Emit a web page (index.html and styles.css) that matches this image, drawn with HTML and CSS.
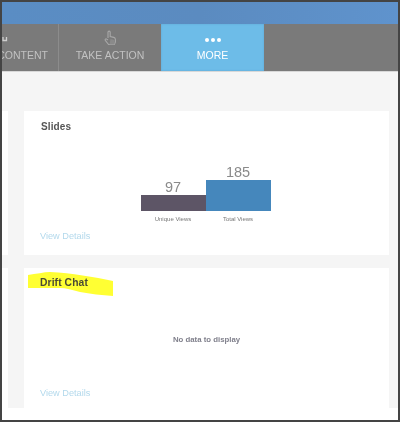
FILE: index.html
```html
<!DOCTYPE html>
<html lang="en">
<head>
<meta charset="utf-8">
<title>Drift Chat</title>
<link rel="stylesheet" href="styles.css">
</head>
<body>
<div class="frame">
  <div class="topbar"></div>
  <nav class="nav">
    <div class="tab tab-clipped">
      <svg class="stub-icon" width="6" height="6" viewBox="0 0 6 6"><path d="M1 0v3.500h3.500V0" fill="none" stroke="#cfcfcf" stroke-width="1.300"/></svg>
      <span class="tab-label">CONTENT</span>
    </div>
    <div class="tab">
      <svg class="tab-icon" width="14" height="16" viewBox="0 0 14 16"><path d="M5 8V2.200a1.100 1.100 0 0 1 2.200 0V6.500l3.600.9c1 .3 1.600.9 1.600 2v2.400l-1 2.700H5.600L2.300 10.400c-.7-1 .5-2 1.400-1.300L5 10" fill="none" stroke="#a8a8a8" stroke-width="1.100"/><path d="M6.500 14.500h5v-4.500l-4-1z" fill="#8a8a8a"/></svg>
      <span class="tab-label">TAKE ACTION</span>
    </div>
    <div class="tab tab-active">
      <div class="dots"><i></i><i></i><i></i></div>
      <span class="tab-label">MORE</span>
    </div>
  </nav>
  <main class="page">
    <div class="row row-first">
      <div class="stub"></div>
      <section class="card">
        <h2 class="card-title">Slides</h2>
        <div class="chart">
          <div class="col">
            <span class="num">97</span>
            <div class="bar bar-unique"></div>
            <span class="axis">Unique Views</span>
          </div>
          <div class="col">
            <span class="num">185</span>
            <div class="bar bar-total"></div>
            <span class="axis">Total Views</span>
          </div>
        </div>
        <a class="details">View Details</a>
      </section>
    </div>
    <div class="row row-second">
      <div class="stub"></div>
      <section class="card">
        <svg class="marker" width="90" height="28" viewBox="0 0 90 28"><path d="M4 6C12 5 20 3 26 3C48 4 70 8 89 12V27C78 26 66 25 56 23C48 21 42 19 36 19H4Z" fill="#ffff33"/></svg>
        <h2 class="card-title card-title-marked">Drift Chat</h2>
        <p class="empty">No data to display</p>
        <a class="details">View Details</a>
      </section>
    </div>
  </main>
  <div class="footer"></div>
</div>
</body>
</html>
```
FILE: styles.css
```css
* { box-sizing: border-box; }
html, body { margin: 0; padding: 0; }
body { width: 400px; height: 422px; overflow: hidden; background: #444; font-family: "Liberation Sans", Arial, sans-serif; }
.frame { width: 400px; height: 422px; border: solid #444; border-width: 2px 2.500px 2px 2px; display: flex; flex-direction: column; filter: blur(0.4px); }
.topbar { height: 22px; background: linear-gradient(90deg, #5a8dc4, #5b8bc0 50%, #5f93cd); }
.nav { height: 48px; display: flex; background: #7a7a7a; border-bottom: 1px solid #d8d8d8; }
.tab { width: 103px; display: flex; flex-direction: column; align-items: center; justify-content: flex-end; padding-bottom: 10px; border-right: 1px solid #8c8c8c; color: #c2c2c2; position: relative; }
.tab-clipped { width: 57px; overflow: hidden; align-items: flex-end; padding-right: 10px; }
.tab-label { font-size: 10.500px; line-height: 12px; white-space: nowrap; }
.stub-icon { position: absolute; left: 0; top: 13px; }
.tab-icon { margin-bottom: 3px; }
.tab-active { background: #6dbce8; color: #fff; border-right: 0; box-shadow: inset 0 0 2px #5ba4cf; margin-left: -1px; }
.dots { display: flex; gap: 2px; margin-bottom: 7px; }
.dots i { width: 4px; height: 4px; border-radius: 50%; background: #fff; display: block; }
.page { height: 336px; background: #f5f5f5; padding: 39px 9px 0 0; display: flex; flex-direction: column; gap: 13px; }
.row { display: flex; gap: 16px; }
.row-first { height: 144px; }
.row-second { height: 140px; }
.stub { width: 6px; background: #fff; }
.card { flex: 1; background: #fff; padding: 9px 16px 0; position: relative; display: flex; flex-direction: column; }
.row-first .card { padding-top: 10px; }
.row-second .card { padding-top: 9px; }
.card-title { margin: 0; font-size: 10px; line-height: 12px; font-weight: 700; color: #555; letter-spacing: 0.100px; position: relative; }
.row-first .card-title { margin-left: 1px; }
.card-title-marked { color: #4a4a35; font-size: 10.300px; }
.marker { position: absolute; left: 0; top: 1px; }
.chart { display: flex; justify-content: center; margin: 16px 2px 0 0; height: 76px; align-items: flex-end; }
.col { width: 65px; display: flex; flex-direction: column; align-items: center; }
.num { font-size: 14.500px; line-height: 16px; color: #8a8a8a; }
.bar { width: 100%; }
.bar-unique { height: 16px; background: #5d5566; }
.bar-total { height: 31px; background: #4587bc; }
.axis { font-size: 6px; line-height: 8px; color: #777; margin-top: 4px; height: 10px; }
.details { font-size: 9.200px; line-height: 12px; color: #b3d9ec; }
.row-first .details { margin-top: 5px; }
.empty { margin: 45px 0 0; text-align: center; font-size: 7.800px; line-height: 12px; font-weight: 700; color: #80808c; }
.row-second .details { margin-top: 41px; }
.footer { flex: 1; background: #fff; }
```
